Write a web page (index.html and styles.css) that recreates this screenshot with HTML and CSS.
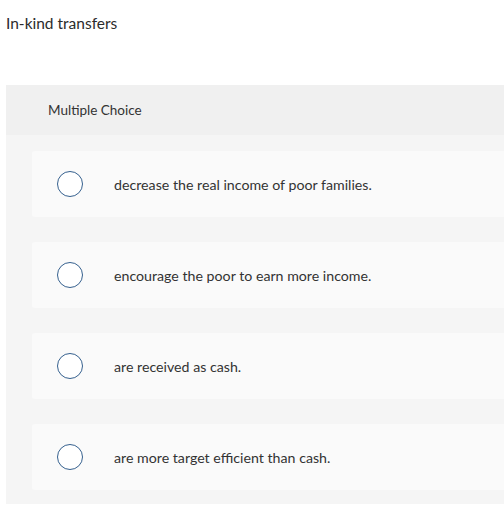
FILE: index.html
```html
<!DOCTYPE html>
<html>
<head>
<meta charset="utf-8">
<link rel="stylesheet" href="styles.css">
</head>
<body>
<div class="page">
  <p class="question">In-kind transfers</p>
  <section class="panel">
    <div class="panel-head">Multiple Choice</div>
    <div class="options">
      <label class="option"><span class="radio"></span><span class="opt-text">decrease the real income of poor families.</span></label>
      <label class="option"><span class="radio"></span><span class="opt-text">encourage the poor to earn more income.</span></label>
      <label class="option"><span class="radio"></span><span class="opt-text">are received as cash.</span></label>
      <label class="option"><span class="radio"></span><span class="opt-text">are more target efficient than cash.</span></label>
    </div>
  </section>
</div>
</body>
</html>
```

FILE: styles.css
```css
html, body {
  margin: 0;
  padding: 0;
  background: #ffffff;
}
body {
  font-family: Lato, "Open Sans", Arial, sans-serif;
  color: #333333;
}
.page {
  padding-left: 6px;
}
.question {
  margin: 0;
  padding-top: 13px;
  height: 85px;
  box-sizing: border-box;
  font-size: 15.5px;
  line-height: 20px;
  color: #2b2b2b;
}
.panel {
  background: #f5f5f5;
  padding-bottom: 14px;
}
.panel-head {
  background: #f0f0f0;
  height: 50px;
  display: flex;
  align-items: center;
  padding-left: 42px;
  font-size: 13.5px;
  color: #333;
}
.options {
  display: flex;
  flex-direction: column;
  gap: 25px;
  padding-top: 16px;
  padding-left: 26px;
}
.option {
  background: #fafafa;
  border-radius: 3px 0 0 3px;
  height: 66px;
  display: flex;
  align-items: center;
}
.radio {
  width: 24px;
  height: 24px;
  border: 1.5px solid #35608e;
  border-radius: 50%;
  background: #fff;
  margin-left: 25px;
  flex: none;
}
.opt-text {
  margin-left: 31px;
  font-size: 14.2px;
  color: #333;
}
```
